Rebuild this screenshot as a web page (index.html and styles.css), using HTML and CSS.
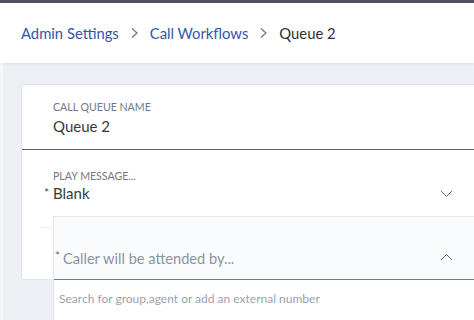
FILE: index.html
```html
<!DOCTYPE html>
<html>
<head>
<meta charset="utf-8">
<link rel="stylesheet" href="styles.css">
</head>
<body>
<div class="topbar"></div>
<header class="header">
  <nav class="crumbs">
    <a class="crumb link">Admin Settings</a>
    <span class="sep"><svg width="9" height="12" viewBox="0 0 9 12"><path d="M2 1.5 L7 6 L2 10.5" fill="none" stroke="#6b7280" stroke-width="1.2"/></svg></span>
    <a class="crumb link">Call Workflows</a>
    <span class="sep"><svg width="9" height="12" viewBox="0 0 9 12"><path d="M2 1.5 L7 6 L2 10.5" fill="none" stroke="#6b7280" stroke-width="1.2"/></svg></span>
    <span class="crumb current">Queue 2</span>
  </nav>
</header>
<main class="main">
  <section class="card">
    <div class="field name-field">
      <div class="label">CALL QUEUE NAME</div>
      <div class="value">Queue 2</div>
    </div>
    <div class="field play-field">
      <div class="label">PLAY MESSAGE...</div>
      <div class="value-row">
        <span class="req">*</span>
        <span class="value">Blank</span>
        <svg class="chev" width="13" height="8" viewBox="0 0 13 8"><path d="M1 1 L6.5 6.5 L12 1" fill="none" stroke="#5b6470" stroke-width="1"/></svg>
      </div>
    </div>
  </section>
  <div class="dropdown">
    <div class="dd-head">
      <span class="req dd-req">*</span>
      <span class="dd-text">Caller will be attended by...</span>
      <svg class="chev" width="13" height="8" viewBox="0 0 13 8"><path d="M1 7 L6.5 1.5 L12 7" fill="none" stroke="#5b6470" stroke-width="1"/></svg>
    </div>
    <div class="dd-search">Search for group,agent or add an external number</div>
  </div>
</main>
</body>
</html>
```
FILE: styles.css
```css
html, body {
  margin: 0;
  padding: 0;
}
body {
  width: 474px;
  height: 320px;
  overflow: hidden;
  font-family: "Lato", "Open Sans", sans-serif;
  background: #eceff3;
  position: relative;
}
.topbar {
  height: 3px;
  background: #4b525c;
}
.header {
  height: 60px;
  background: #ffffff;
  display: flex;
  align-items: center;
  padding-left: 21px;
  box-shadow: 0 1px 2px rgba(0,0,0,0.06);
  position: relative;
  z-index: 1;
}
.crumbs {
  display: flex;
  align-items: center;
  font-size: 14.8px;
  padding-bottom: 1px;
}
.crumb.link {
  color: #2f57a8;
}
.crumb.current {
  color: #2b2f36;
}
.sep {
  display: flex;
  align-items: center;
  margin: 0 11px;
}
.main {
  position: relative;
  height: 257px;
  padding: 21px 0 0 18px;
  border-left: 3px solid #f6f7f9;
  box-sizing: border-box;
}
.card {
  background: #ffffff;
  border: 1px solid #e1e4e8;
  border-right: none;
  border-radius: 3px 0 0 3px;
  height: 196px;
  box-sizing: border-box;
}
.field {
  padding-left: 31px;
}
.name-field {
  height: 65px;
  box-sizing: border-box;
  padding-top: 15px;
  border-bottom: 1.5px solid #5d646d;
}
.label {
  font-size: 10.6px;
  color: #717984;
  line-height: 14px;
}
.value {
  font-size: 15px;
  color: #353a40;
  line-height: 20px;
}
.name-field .value {
  margin-top: 2px;
}
.play-field {
  padding-top: 19px;
  padding-right: 20px;
  height: 58px;
  border-bottom: 1px solid #eef0f2;
  margin-left: 18px;
  padding-left: 13px;
}
.value-row {
  display: flex;
  align-items: center;
  position: relative;
}
.req {
  position: absolute;
  left: -9px;
  top: 2px;
  font-size: 12px;
  color: #444a52;
}
.value-row .chev {
  margin-left: auto;
  margin-right: 1px;
  margin-top: 2px;
}
.dropdown {
  position: absolute;
  left: 50px;
  top: 153px;
  right: 0;
  bottom: 0;
  background: #ffffff;
  border-left: 1px solid #e3e6ea;
}
.dd-head {
  height: 64px;
  box-sizing: border-box;
  background: #fafbfc;
  border-top: 1px solid #e6e8eb;
  border-bottom: 1.5px solid #6f7e8c;
  display: flex;
  align-items: center;
  padding-top: 20px;
  padding-left: 9px;
  padding-right: 21px;
  position: relative;
}
.dd-req {
  left: 1px;
  top: 31px;
  color: #6b7480;
}
.dd-text {
  font-size: 14.6px;
  color: #8a939e;
}
.dd-head .chev {
  margin-left: auto;
  margin-top: -2px;
}
.dd-search {
  padding: 11px 0 0 5px;
  font-size: 12px;
  color: #9aa2ad;
}
```
